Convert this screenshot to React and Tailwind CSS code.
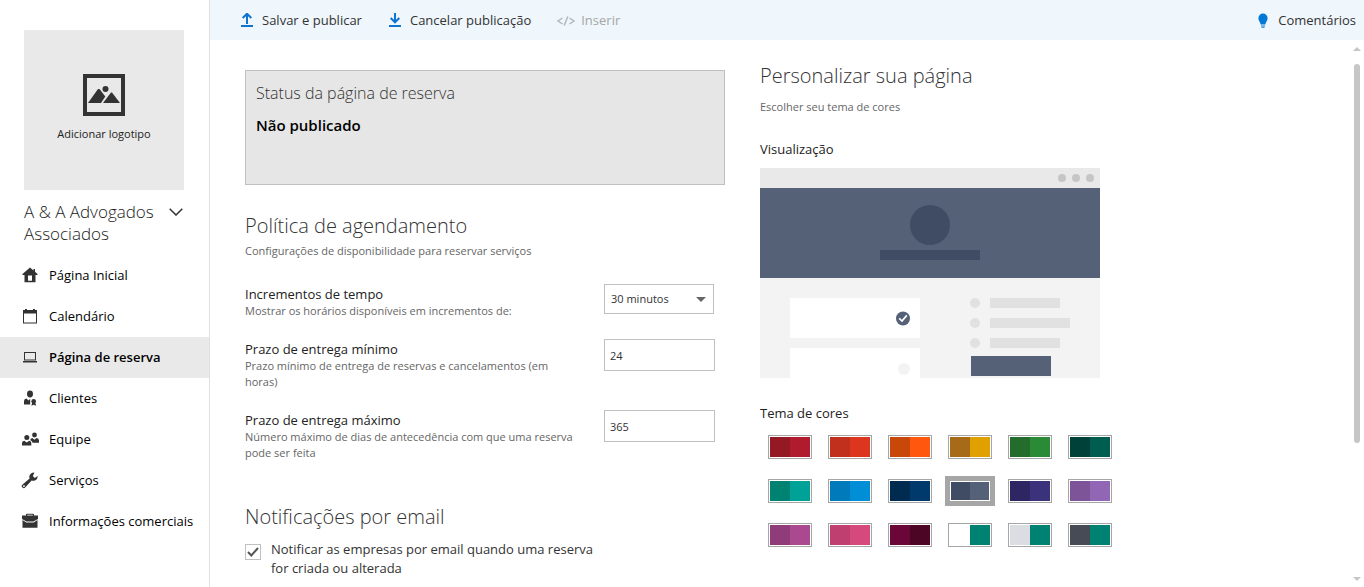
import React, { useState } from 'react';

const navItems = [
  { id: 'home', label: 'Página Inicial' },
  { id: 'calendar', label: 'Calendário' },
  { id: 'booking', label: 'Página de reserva' },
  { id: 'customers', label: 'Clientes' },
  { id: 'staff', label: 'Equipe' },
  { id: 'services', label: 'Serviços' },
  { id: 'business', label: 'Informações comerciais' },
];

// Each theme is a dark / base colour pair
const themes = [
  { name: 'Vermelho', dark: '#951825', base: '#b01c2e' },
  { name: 'Tijolo', dark: '#c1301c', base: '#dd361f' },
  { name: 'Laranja', dark: '#c8480a', base: '#ff570d' },
  { name: 'Ouro', dark: '#a76a18', base: '#e0a000' },
  { name: 'Verde', dark: '#246c2b', base: '#2b8a36' },
  { name: 'Verde escuro', dark: '#00423a', base: '#005e50' },
  { name: 'Turquesa', dark: '#008272', base: '#00a297' },
  { name: 'Azul', dark: '#007aba', base: '#008ed6' },
  { name: 'Azul escuro', dark: '#002b50', base: '#00396b' },
  { name: 'Ardósia', dark: '#404c63', base: '#556177' },
  { name: 'Índigo', dark: '#2e2662', base: '#3b327c' },
  { name: 'Roxo', dark: '#7e5499', base: '#9166b5' },
  { name: 'Magenta', dark: '#913c7a', base: '#aa4990' },
  { name: 'Rosa', dark: '#be3f70', base: '#d6497d' },
  { name: 'Vinho', dark: '#6b0638', base: '#4d0526' },
  { name: 'Branco', dark: '#ffffff', base: '#008272' },
  { name: 'Cinza claro', dark: '#dadde2', base: '#008272' },
  { name: 'Grafite', dark: '#474b55', base: '#008272' },
];

const NavIcon = ({ id }) => {
  const common = { width: 18, height: 18, viewBox: '0 0 18 18', fill: '#333', className: 'shrink-0', 'aria-hidden': true };
  switch (id) {
    case 'home':
      return (
        <svg {...common}>
          <path fillRule="evenodd" d="M9 0.5 L12.5 3.4 V2 H14 V4.7 L16.5 7 V8 H14.5 V15.2 H3.5 V8 H1.5 V7 Z M7 8.5 V13.7 H11 V8.5 Z" />
        </svg>
      );
    case 'calendar':
      return (
        <svg {...common}>
          <path d="M2 2 H4 V1 H6 V2 H7.5 V3 H10.5 V2 H12 V1 H14 V2 H16 V5 H14.5 L13 4 L11.5 5 H6.5 L5 4 L3.5 5 H2 Z" />
          <path fillRule="evenodd" d="M2 2 H16 V15.5 H2 Z M3 5.5 V14.5 H15 V5.5 Z M3 3 V4.5 H4 V3 Z M14 3 V4.5 H15 V3 Z" />
        </svg>
      );
    case 'booking':
      return (
        <svg {...common}>
          <path fillRule="evenodd" d="M3 3 H15 V11.5 H3 Z M4 4 V10.5 H14 V4 Z" />
          <path d="M2 12 H16 V13.5 H2 Z" />
        </svg>
      );
    case 'customers':
      return (
        <svg {...common}>
          <ellipse cx="9" cy="4" rx="3" ry="3.4" />
          <path d="M3 14.5 V11 Q3 8.8 5.5 8.5 L7.5 10.5 L9.2 8.8 V14.5 Z" />
          <circle cx="12.7" cy="11.3" r="2.3" />
          <path d="M11.2 12.5 H14.2 L15.2 15.8 L12.7 14.8 L10.4 15.8 Z" />
        </svg>
      );
    case 'staff':
      return (
        <svg {...common}>
          <circle cx="5.8" cy="6.6" r="2.5" />
          <path d="M1 14.5 V12 Q1 10 3.2 9.8 L5.8 11.5 L8.2 9.8 Q10.3 10 10.3 12 V14.5 Z" />
          <circle cx="13.5" cy="4" r="2.4" />
          <path d="M9.2 9 Q9.5 7.3 11.3 7 L13.5 8.8 L15.4 7 Q18 7.3 18 9.5 V11.7 H11.6 Q11.2 10 9.2 9 Z" />
        </svg>
      );
    case 'services':
      return (
        <svg {...common}>
          <path fillRule="evenodd" d="M13.4 0.7 A4.3 4.3 0 0 0 8.6 6.5 L1.6 12.5 A2 2 0 1 0 4.4 15.3 L10.6 8.5 A4.3 4.3 0 0 0 16.6 4.1 L13.8 5.9 L11.8 4.1 Z M3 13.2 A0.9 0.9 0 1 1 2.9 13.2 Z" />
        </svg>
      );
    default:
      return (
        <svg {...common}>
          <path fillRule="evenodd" d="M5 2.5 V1.6 Q5 0.8 6 0.8 H12 Q13 0.8 13 1.6 V2.5 H17 V6 L12.5 8.6 H5.5 L1 6 V2.5 Z M6.2 1.8 V2.5 H11.8 V1.8 Z" />
          <path d="M1.5 7 L5.3 9.6 H12.7 L16.5 7 V14.8 H1.5 Z" />
        </svg>
      );
  }
};

const Sidebar = ({ active, onSelect }) => (
  <aside className="flex w-[210px] shrink-0 flex-col border-r border-[#e0e0e0] pt-[30px]">
    <button type="button" className="mx-6 flex h-40 w-40 flex-col items-center bg-[#e9e9e9] pt-11 text-[11px] leading-4 text-[#222]">
      <svg width="42" height="42" viewBox="0 0 42 42" fill="#333" aria-hidden="true">
        <path fillRule="evenodd" d="M0 0 H42 V42 H0 Z M4 4 V38 H38 V4 Z" />
        <circle cx="22.5" cy="15" r="3" />
        <path d="M5 29 L15 15 H16.5 L22.3 22.5 L18 29 Z" />
        <path d="M20 29 L28 18.5 H29 L37 29 Z" />
      </svg>
      <span className="mt-2.5">Adicionar logotipo</span>
    </button>

    <button type="button" className="mr-[26px] ml-6 mt-[11px] flex items-start justify-between text-left text-[17px] leading-[22px] font-light text-[#222]">
      <span className="flex-1">A &amp; A Advogados Associados</span>
      <svg width="14" height="8" viewBox="0 0 14 8" fill="none" stroke="#333" strokeWidth="1.5" className="mt-[7px] shrink-0" aria-hidden="true">
        <path d="M0.7 0.8 L7 7 L13.3 0.8" />
      </svg>
    </button>

    <nav className="mt-[10px] flex flex-col">
      {navItems.map((item) => (
        <a
          key={item.id}
          href={`#${item.id}`}
          onClick={() => onSelect(item.id)}
          className={`flex h-[41px] items-center gap-[10px] pl-[21px] text-[13px] whitespace-nowrap text-black ${
            item.id === active ? 'bg-[#e9e9e9] font-semibold' : ''
          }`}
        >
          <NavIcon id={item.id} />
          {item.label}
        </a>
      ))}
    </nav>
  </aside>
);

const Toolbar = () => (
  <header className="flex h-10 shrink-0 items-center bg-[#eff6fc] pt-0.5 pr-2 pl-[31px] text-[13px] text-[#333]">
    <button type="button" className="flex items-center gap-[9px]">
      <svg width="12" height="16" viewBox="0 0 12 16" fill="none" stroke="#0f73d0" strokeWidth="2" aria-hidden="true">
        <path d="M6 11 V1 M1.7 5 L6 0.7 L10.3 5 M0 13 H12" />
      </svg>
      Salvar e publicar
    </button>
    <button type="button" className="ml-[27px] flex items-center gap-[9px]">
      <svg width="12" height="16" viewBox="0 0 12 16" fill="none" stroke="#0f73d0" strokeWidth="2" aria-hidden="true">
        <path d="M6 0 V9 M1.7 5 L6 9.3 L10.3 5 M0 13 H12" />
      </svg>
      Cancelar publicação
    </button>
    <button type="button" disabled className="ml-[26px] flex items-center gap-[6px] text-[#a6a6a6]">
      <svg width="18" height="10" viewBox="0 0 18 10" fill="none" stroke="#b4b8bc" strokeWidth="1.5" aria-hidden="true">
        <path d="M5.5 2 L1 5 L5.5 8 M12.5 2 L17 5 L12.5 8 M10.8 0.5 L7.2 9.5" />
      </svg>
      Inserir
    </button>
    <button type="button" className="ml-auto flex items-center gap-[10px]">
      <svg width="10" height="16" viewBox="0 0 10 16" fill="#0078d7" aria-hidden="true">
        <path d="M5 0.5 A4.6 4.6 0 0 1 9.6 5.2 C9.6 8 7.6 8.8 7.4 11.6 H2.6 C2.4 8.8 0.4 8 0.4 5.2 A4.6 4.6 0 0 1 5 0.5 Z M3 12.6 H7 V13.4 H3 Z M3.5 14.2 H6.5 V15 H3.5 Z" />
      </svg>
      Comentários
    </button>
  </header>
);

const PolicyRow = ({ id, label, hint, children }) => (
  <div className="flex items-start justify-between">
    <div className="w-[338px] pt-px">
      <label htmlFor={id} className="block text-[13px] leading-[18px] text-[#222]">{label}</label>
      <p className="text-[11px] leading-4 text-[#666]">{hint}</p>
    </div>
    <div className="w-[111px]">{children}</div>
  </div>
);

const fieldClass = 'block h-8 w-full border border-[#c0c0c0] bg-white px-[5px] text-[11px] text-[#333] outline-none';

const PagePreview = ({ theme }) => (
  <svg width="340" height="210" viewBox="0 0 340 210" className="mt-[10px] block" role="img" aria-label="Visualização">
    <rect width="340" height="210" fill="#f3f3f3" />
    <rect width="340" height="20" fill="#e9e9e9" />
    <circle cx="302" cy="10" r="4" fill="#c6c6c6" />
    <circle cx="316" cy="10" r="4" fill="#c6c6c6" />
    <circle cx="330" cy="10" r="4" fill="#c6c6c6" />
    <rect y="20" width="340" height="90" fill={theme.base} />
    <circle cx="170" cy="57" r="20" fill={theme.dark} />
    <rect x="120" y="82" width="100" height="10" fill={theme.dark} />
    <rect x="30" y="130" width="130" height="40" fill="#fff" />
    <rect x="30" y="180" width="130" height="30" fill="#fff" />
    <circle cx="143" cy="150.5" r="7" fill={theme.base} />
    <path d="M139.2 150.4 L142 153 L146.8 147.4" fill="none" stroke="#fff" strokeWidth="1.7" />
    <circle cx="144" cy="201" r="6" fill="#f3f3f3" />
    <g fill="#e1e1e1">
      <circle cx="215" cy="135" r="5" />
      <circle cx="215" cy="155" r="5" />
      <circle cx="215" cy="175" r="5" />
      <rect x="230" y="130" width="70" height="10" />
      <rect x="230" y="150" width="80" height="10" />
      <rect x="230" y="170" width="70" height="10" />
    </g>
    <rect x="211" y="188" width="80" height="20" fill={theme.base} />
  </svg>
);

const ThemeSwatch = ({ theme, checked, onChange }) => (
  <label className="flex h-11 w-[60px] cursor-pointer items-center justify-center">
    <input type="radio" name="theme" aria-label={theme.name} checked={checked} onChange={onChange} className="sr-only" />
    <span className={checked ? 'h-[30px] w-[50px] bg-[#a6a6a6] p-[5px]' : 'h-6 w-11 border border-[#a6a6a6] bg-white p-px'}>
      <span className={checked ? 'flex h-full border border-white' : 'flex h-full'}>
        <span className="flex-1" style={{ backgroundColor: theme.dark }} />
        <span className="flex-1" style={{ backgroundColor: theme.base }} />
      </span>
    </span>
  </label>
);

const ScrollTrack = () => (
  <div className="flex w-[14px] shrink-0 flex-col items-center pt-[7px] pb-[6px]" aria-hidden="true">
    <svg width="8" height="4" viewBox="0 0 8 4" fill="#c6c6c6"><path d="M0 4 L4 0 L8 4 Z" /></svg>
    <div className="mt-[13px] mb-2 flex-1">
      <div className="h-3/4 w-[6px] rounded-full bg-[#c6c6c6]" />
    </div>
    <svg width="8" height="4" viewBox="0 0 8 4" fill="#c6c6c6"><path d="M0 0 L4 4 L8 0 Z" /></svg>
  </div>
);

const App = () => {
  const [active, setActive] = useState('booking');
  const [themeIndex, setThemeIndex] = useState(9);
  const [increment, setIncrement] = useState('30');
  const [minLead, setMinLead] = useState('24');
  const [maxLead, setMaxLead] = useState('365');
  const [notify, setNotify] = useState(true);

  return (
    <div className="flex h-screen overflow-hidden bg-white font-['Open_Sans',sans-serif]">
      <Sidebar active={active} onSelect={setActive} />

      <div className="flex min-w-0 flex-1 flex-col">
        <Toolbar />

        <div className="flex min-h-0 flex-1">
          <main className="flex min-w-0 flex-1 items-start gap-[35px] overflow-hidden pl-[35px]">
            <div className="w-[480px] shrink-0 pt-[30px]">
              {/* Status */}
              <section className="h-[115px] border border-[#c0c0c0] bg-[#e6e6e6] px-[10px] pt-[10px]">
                <h2 className="text-base leading-6 font-light text-[#333]">Status da página de reserva</h2>
                <p className="mt-2 text-[15px] leading-6 font-semibold text-black">Não publicado</p>
              </section>

              {/* Scheduling policy */}
              <section className="mt-[27px] pr-[10px]">
                <h2 className="text-xl leading-7 font-light text-[#333]">Política de agendamento</h2>
                <p className="mt-[3px] text-[11px] leading-4 text-[#666]">Configurações de disponibilidade para reservar serviços</p>

                <div className="mt-[25px] flex flex-col gap-5">
                  <PolicyRow id="increment" label="Incrementos de tempo" hint="Mostrar os horários disponíveis em incrementos de:">
                    <div className="grid w-[110px] items-center">
                      <select
                        id="increment"
                        value={increment}
                        onChange={(e) => setIncrement(e.target.value)}
                        className="col-start-1 row-start-1 h-[30px] w-full appearance-none border border-[#c0c0c0] bg-white pl-[6px] text-[11px] text-[#333] outline-none"
                      >
                        <option value="15">15 minutos</option>
                        <option value="30">30 minutos</option>
                        <option value="60">1 hora</option>
                      </select>
                      <svg width="10" height="5" viewBox="0 0 10 5" fill="#666" className="pointer-events-none col-start-1 row-start-1 mr-2 justify-self-end" aria-hidden="true">
                        <path d="M0 0 H10 L5 5 Z" />
                      </svg>
                    </div>
                  </PolicyRow>
                  <PolicyRow id="min-lead" label="Prazo de entrega mínimo" hint="Prazo mínimo de entrega de reservas e cancelamentos (em horas)">
                    <input id="min-lead" type="text" value={minLead} onChange={(e) => setMinLead(e.target.value)} className={fieldClass} />
                  </PolicyRow>
                  <PolicyRow id="max-lead" label="Prazo de entrega máximo" hint="Número máximo de dias de antecedência com que uma reserva pode ser feita">
                    <input id="max-lead" type="text" value={maxLead} onChange={(e) => setMaxLead(e.target.value)} className={fieldClass} />
                  </PolicyRow>
                </div>
              </section>

              {/* Email notifications */}
              <section className="mt-[42px]">
                <h2 className="text-xl leading-7 font-light text-[#333]">Notificações por email</h2>
                <label className="mt-[9px] flex items-start gap-[10px] text-[13px] leading-[19px] text-[#333]">
                  <span className="mt-1 grid shrink-0 place-items-center">
                    <input
                      type="checkbox"
                      checked={notify}
                      onChange={(e) => setNotify(e.target.checked)}
                      className="col-start-1 row-start-1 h-4 w-4 appearance-none border border-[#c0c0c0] bg-white"
                    />
                    {notify && (
                      <svg width="12" height="10" viewBox="0 0 12 10" fill="none" stroke="#555" strokeWidth="2" className="pointer-events-none col-start-1 row-start-1" aria-hidden="true">
                        <path d="M1 5 L4.3 8.5 L11 1" />
                      </svg>
                    )}
                  </span>
                  <span className="w-[335px]">Notificar as empresas por email quando uma reserva for criada ou alterada</span>
                </label>
              </section>
            </div>

            {/* Page customization */}
            <section className="w-[360px] shrink-0 pt-[22px]">
              <h2 className="text-xl leading-7 font-light text-[#333]">Personalizar sua página</h2>
              <p className="mt-[9px] text-[11px] leading-4 text-[#666]">Escolher seu tema de cores</p>
              <h3 className="mt-[25px] text-[13px] leading-[18px] text-[#222]">Visualização</h3>
              <PagePreview theme={themes[themeIndex]} />
              <fieldset className="mt-[26px]">
                <legend className="text-[13px] leading-[18px] text-[#222]">Tema de cores</legend>
                <div className="mt-[3px] grid grid-cols-6">
                  {themes.map((theme, i) => (
                    <ThemeSwatch key={theme.name} theme={theme} checked={i === themeIndex} onChange={() => setThemeIndex(i)} />
                  ))}
                </div>
              </fieldset>
            </section>
          </main>
          <ScrollTrack />
        </div>
      </div>
    </div>
  );
};

export default App;
